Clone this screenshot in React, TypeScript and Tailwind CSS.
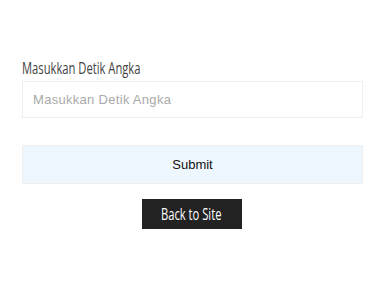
export default function App() {
  return (
    <div className="w-[384px] h-[292px] bg-white" style={{ fontFamily: '"Liberation Sans", Arial, sans-serif' }}>
      <form className="flex flex-col px-[22px] pt-[58px]" onSubmit={(e) => e.preventDefault()}>
        <label
          htmlFor="detik"
          className="self-start inline-block origin-left scale-x-[0.7] text-[16px] leading-[20px] text-[#444] font-['Open_Sans',sans-serif] whitespace-nowrap"
        >
          Masukkan Detik Angka
        </label>
        <input
          id="detik"
          type="text"
          placeholder="Masukkan Detik Angka"
          className="mt-[3px] w-[341px] h-[37px] border border-[#eeeeee] px-[10px] text-[13px] tracking-[0.3px] text-[#555] placeholder:text-[#aaaaaa] outline-none"
        />
        <button
          type="submit"
          className="mt-[27px] w-[341px] h-[39px] bg-[#eff7fe] border border-[#eeeeee] text-[13px] text-[#111]"
        >
          Submit
        </button>
        <div className="flex justify-center mt-[15px] pr-[1px]">
          <a
            href="#"
            className="flex items-center justify-center w-[100px] h-[30px] bg-[#222222] text-white"
          >
            <span className="inline-block scale-x-[0.7] text-[16px] font-['Open_Sans',sans-serif] whitespace-nowrap">
              Back to Site
            </span>
          </a>
        </div>
      </form>
    </div>
  );
}
